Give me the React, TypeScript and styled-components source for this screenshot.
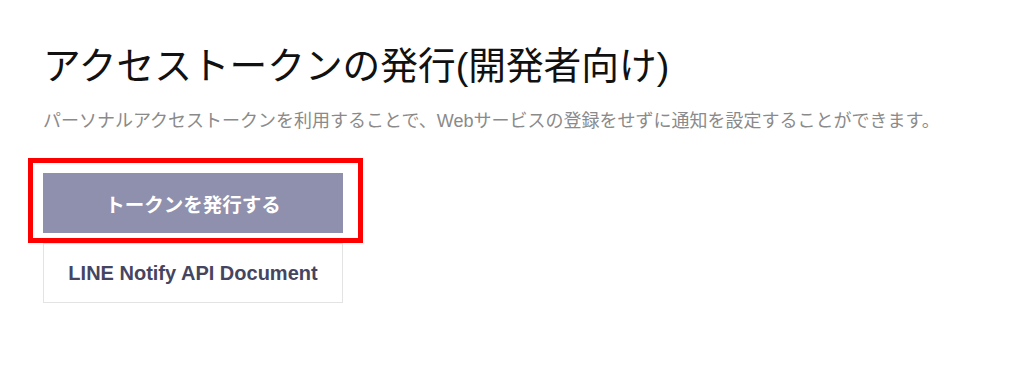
import React from "react";
import styled, { createGlobalStyle } from "styled-components";

const Global = createGlobalStyle`
  html, body { margin: 0; padding: 0; background: #ffffff; }
  body { font-family: "Liberation Sans", "Noto Sans CJK JP", sans-serif; }
`;

const Page = styled.main`
  padding: 38px 0 0 43px;
`;

const Title = styled.h1`
  margin: 0;
  font-family: "Liberation Sans", "Noto Sans CJK JP", sans-serif;
  font-weight: 400;
  font-size: 37.7px;
  line-height: 56px;
  color: #111111;
  white-space: nowrap;
`;

const Lead = styled.p`
  margin: 15px 0 0;
  font-family: "Liberation Sans", "Noto Sans CJK JP", sans-serif;
  font-size: 18px;
  line-height: 24px;
  color: #8a8a8a;
  white-space: nowrap;
`;

const Actions = styled.div`
  display: flex;
  flex-direction: column;
  gap: 10px;
  width: 300px;
  margin-top: 40px;
`;

const Highlight = styled.div`
  position: relative;
`;

const Marker = styled.div`
  position: absolute;
  left: -15px;
  top: -15px;
  right: -20px;
  bottom: -10px;
  border: 5px solid #ff0000;
  pointer-events: none;
`;

const Button = styled.button<{ $variant: "primary" | "outline" }>`
  display: flex;
  align-items: center;
  justify-content: center;
  width: 300px;
  height: 60px;
  margin: 0;
  padding: 0;
  box-sizing: border-box;
  font-family: "Liberation Sans", "Noto Sans CJK JP", sans-serif;
  font-weight: 700;
  font-size: ${(p) => (p.$variant === "primary" ? "19.5px" : "20px")};
  cursor: pointer;
  background: ${(p) => (p.$variant === "primary" ? "#8f90ad" : "#ffffff")};
  color: ${(p) => (p.$variant === "primary" ? "#ffffff" : "#454562")};
  border: ${(p) => (p.$variant === "primary" ? "none" : "1px solid #e3e3e3")};
`;

export default function App() {
  return (
    <>
      <Global />
      <Page>
        <Title>アクセストークンの発行(開発者向け)</Title>
        <Lead>
          パーソナルアクセストークンを利用することで、Webサービスの登録をせずに通知を設定することができます。
        </Lead>
        <Actions>
          <Highlight>
            <Button $variant="primary">トークンを発行する</Button>
            <Marker />
          </Highlight>
          <Button $variant="outline">LINE Notify API Document</Button>
        </Actions>
      </Page>
    </>
  );
}
